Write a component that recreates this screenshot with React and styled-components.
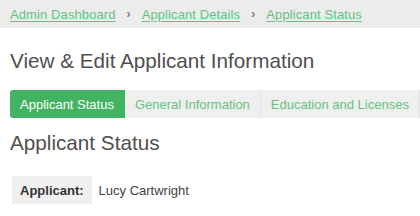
import React from "react";
import styled, { createGlobalStyle } from "styled-components";

const Global = createGlobalStyle`
  html, body { margin: 0; padding: 0; background: #fff; overflow: hidden; }
  body { font-family: "Liberation Sans", Arial, sans-serif; width: 420px; height: 216px; }
`;

const Breadcrumbs = styled.nav`
  display: flex;
  align-items: center;
  height: 28px;
  padding: 0 10px;
  background: #ececec;
  font-size: 13px;
  letter-spacing: 0.1px;
`;

const Crumb = styled.a`
  color: #66c07f;
  text-decoration: underline;
  text-underline-offset: 2px;
  cursor: pointer;
`;

const Sep = styled.span`
  color: #7a7a7a;
  font-size: 12px;
  font-weight: 700;
  padding: 0 11px;
`;

const Main = styled.main`
  padding: 0 10px;
`;

const Title = styled.h1`
  margin: 20px 0 17px;
  font-size: 20.7px;
  line-height: 25px;
  font-weight: 400;
  color: #4f4f4f;
  white-space: nowrap;
`;

const Tabs = styled.div`
  display: flex;
  width: max-content;
  height: 28px;
  border-radius: 3px;
  background: #efefef;
`;

const Tab = styled.button`
  display: flex;
  align-items: center;
  height: 28px;
  padding: 0 10px;
  border: none;
  border-right: 1px solid ${(p) => (p.$active ? "transparent" : "#e2e2e2")};
  border-radius: ${(p) => (p.$active ? "3px 0 0 3px" : "0")};
  background: ${(p) => (p.$active ? "#42b461" : "transparent")};
  color: ${(p) => (p.$active ? "#fff" : "#66c281")};
  font-family: inherit;
  font-size: 13px;
  white-space: nowrap;
  cursor: pointer;
`;

const Heading = styled.h2`
  margin: 12px 0 21px;
  font-size: 20.7px;
  line-height: 25px;
  font-weight: 400;
  color: #4f4f4f;
`;

const Row = styled.div`
  display: flex;
  align-items: center;
  margin-left: 2px;
  font-size: 13px;
`;

const Label = styled.div`
  display: flex;
  align-items: center;
  height: 28px;
  padding: 0 8px;
  background: #f0f0f0;
  font-weight: 700;
  color: #333;
`;

const Value = styled.div`
  padding-left: 7px;
  color: #444;
`;

export default function App() {
  return (
    <>
      <Global />
      <Breadcrumbs>
        <Crumb>Admin Dashboard</Crumb>
        <Sep>›</Sep>
        <Crumb>Applicant Details</Crumb>
        <Sep>›</Sep>
        <Crumb>Applicant Status</Crumb>
      </Breadcrumbs>
      <Main>
        <Title>View &amp; Edit Applicant Information</Title>
        <Tabs>
          <Tab $active>Applicant Status</Tab>
          <Tab>General Information</Tab>
          <Tab>Education and Licenses</Tab>
        </Tabs>
        <Heading>Applicant Status</Heading>
        <Row>
          <Label>Applicant:</Label>
          <Value>Lucy Cartwright</Value>
        </Row>
      </Main>
    </>
  );
}
